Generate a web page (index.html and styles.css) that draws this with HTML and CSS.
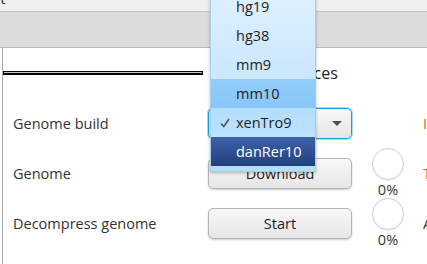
FILE: index.html
```html
<!DOCTYPE html>
<html lang="en">
  <head>
    <meta charset="UTF-8" />
    <meta name="viewport" content="width=device-width, initial-scale=1.0" />
    <title>Genome sources</title>
    <link rel="stylesheet" href="styles.css">
  </head>
  <body>
    <div class="menubar"><span class="menu-item">Edit</span></div>
    <div class="toolbar"></div>

    <div class="content">
      <div class="header">
        <div class="rule"></div>
        <div class="title">Genome sources</div>
      </div>

      <!-- genome build -->
      <div class="row">
        <div class="label">Genome build</div>
        <div class="combo">
          <span class="combo-value">xenTro9</span>
          <span class="arrow"></span>
        </div>
        <div class="spinner-slot"></div>
        <div class="status orange">Installed</div>
      </div>

      <!-- genome -->
      <div class="row">
        <div class="label">Genome</div>
        <button class="btn">Download</button>
        <div class="spinner-slot">
          <div class="ring"></div>
          <div class="percent">0%</div>
        </div>
        <div class="status orange">To do</div>
      </div>

      <!-- decompress -->
      <div class="row">
        <div class="label">Decompress genome</div>
        <button class="btn">Start</button>
        <div class="spinner-slot">
          <div class="ring"></div>
          <div class="percent">0%</div>
        </div>
        <div class="status">Awaiting</div>
      </div>
    </div>

    <div class="popup">
      <div class="item">hg19</div>
      <div class="item">hg38</div>
      <div class="item">mm9</div>
      <div class="item hover">mm10</div>
      <div class="item checked">
        <svg class="check" width="10" height="10" viewBox="0 0 10 10">
          <path d="M1 5.5 L3.8 8.5 L9 1" fill="none" stroke="#555" stroke-width="1.6" />
        </svg>xenTro9
      </div>
      <div class="item focused">danRer10</div>
    </div>
  </body>
</html>
```

FILE: styles.css
```css
html, body {
  margin: 0;
  width: 427px;
  height: 264px;
  overflow: hidden;
}

body {
  font-family: "Open Sans", "Noto Sans", sans-serif;
  font-size: 14.5px;
  color: #333;
  background: #fff;
  position: relative;
}

.menubar {
  height: 11px;
  background: #efefef;
  border-bottom: 1px solid #c4c4c4;
  overflow: hidden;
}

.menu-item {
  display: block;
  margin-top: -12px;
  margin-left: -21px;
  font-size: 15px;
  line-height: 20px;
  color: #1d2a3a;
}

.toolbar {
  height: 35px;
  background: #dcdcdc;
  border-bottom: 1px solid #b9b9b9;
}

.content {
  margin-left: 2px;
  border-left: 1px solid #a9a9a9;
  height: 216px;
}

.header {
  height: 50px;
  display: flex;
  align-items: center;
}

.rule {
  flex-shrink: 0;
  width: 198px;
  height: 1px;
  background: #c8c8c8;
  border: 1px solid #000;
  border-bottom-width: 2px;
}

.title {
  margin-left: 9px;
  font-size: 16px;
  color: #222;
  white-space: nowrap;
}

.row {
  height: 50px;
  display: flex;
  align-items: center;
  padding-left: 10px;
}

.row > * {
  flex-shrink: 0;
}

.label {
  width: 195px;
  color: #333;
}

.combo,
.btn {
  width: 144px;
  height: 31px;
  box-sizing: border-box;
  border-radius: 5px;
  border: 1px solid #b4b4b4;
  background: linear-gradient(#f8f8f8, #e6e6e6);
  box-shadow: 0 1px 2px rgba(0, 0, 0, 0.2);
}

.combo {
  display: flex;
  align-items: center;
  justify-content: space-between;
  padding: 0 9px 0 12px;
  border-color: #1aa1d6;
  box-shadow: 0 0 0 1px #a3dcf2;
}

.arrow {
  width: 0;
  height: 0;
  border-left: 5px solid transparent;
  border-right: 5px solid transparent;
  border-top: 5px solid #4d4d4d;
}

.btn {
  font-family: inherit;
  font-size: 14.5px;
  color: #222;
  padding: 0;
  margin: 0;
}

.spinner-slot {
  width: 32px;
  height: 50px;
  margin-left: 20px;
  display: flex;
  flex-direction: column;
  align-items: center;
  align-self: flex-start;
}

.ring {
  width: 30px;
  height: 30px;
  border-radius: 50%;
  border: 1px solid #cfcfcf;
  box-shadow: 0 1px 1px rgba(0, 0, 0, 0.08);
}

.percent {
  font-size: 14.5px;
  line-height: 16px;
  margin-top: 2px;
  color: #333;
}

.status {
  margin-left: 19px;
  white-space: nowrap;
  color: #333;
}

.status.orange {
  color: #c5731f;
}

.popup {
  position: absolute;
  left: 210px;
  top: -8px;
  width: 104px;
  padding-bottom: 5px;
  border: 1px solid #a7cde8;
  border-top: none;
  background: linear-gradient(#dff0fe, #b4defc);
  box-shadow: 0 1px 3px rgba(0, 0, 0, 0.25);
}

.item {
  height: 29px;
  line-height: 29px;
  padding-left: 25px;
  position: relative;
  color: #1e1e1e;
}

.item.hover {
  background: linear-gradient(#93cdfa, #87c6f8);
}

.item.checked {
  background: linear-gradient(#b3ddfd, #bbe3fe);
}

.check {
  position: absolute;
  left: 9px;
  top: 10px;
}

.item.focused {
  background: linear-gradient(#3e61a8, #22407e);
  color: #fff;
}
```
